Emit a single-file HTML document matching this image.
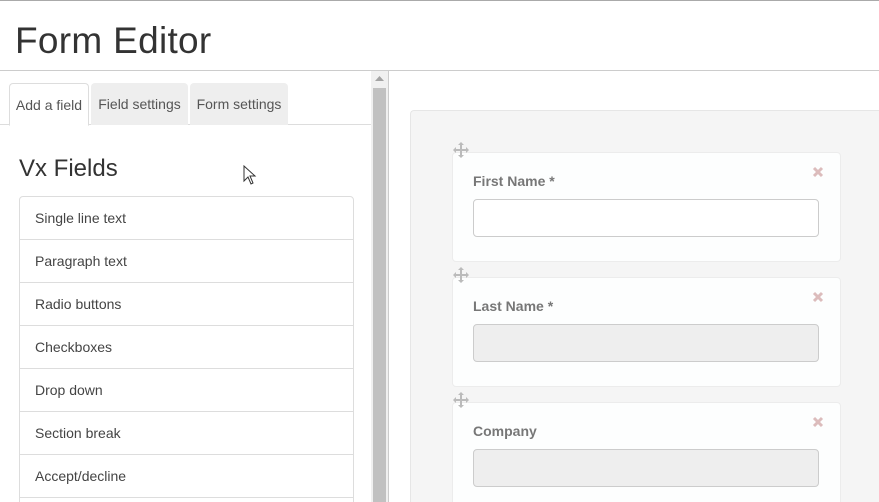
<!DOCTYPE html>
<html style="width:879px;height:502px;overflow:hidden"><head><style>
*{margin:0;padding:0;box-sizing:border-box}
body{width:879px;height:502px;overflow:hidden;background:#fff;font-family:"Liberation Sans",sans-serif;position:relative}
.a{position:absolute}
.tab{position:absolute;top:83px;height:42px;font-size:14px;color:#555;line-height:42px;text-align:center;border-radius:4px 4px 0 0}
.item{position:absolute;left:19px;width:335px;height:44px;border:1px solid #ddd;font-size:14px;color:#444;padding-left:15px;line-height:42px;background:#fff}
.card{position:absolute;left:452px;width:389px;height:110px;background:#fdfefe;border:1px solid #ececec;border-radius:4px}
.lbl{position:absolute;left:20px;top:20px;font-size:14px;font-weight:bold;color:#777}
.inp{position:absolute;left:20px;top:46px;width:346px;height:38px;border:1px solid #ccc;border-radius:4px;background:#fff}
.x{position:absolute;left:359px;top:13px}
.mv{position:absolute;z-index:5}
</style></head><body>
<div class="a" style="left:0;top:0;width:879px;height:1px;background:#aaa"></div>
<div class="a" style="left:15px;top:18px;font-size:37px;color:#333;line-height:46px;letter-spacing:0.3px">Form Editor</div>
<div class="a" style="left:0;top:70px;width:879px;height:1px;background:#ccc"></div>

<div class="a" style="left:0;top:124px;width:371px;height:1px;background:#ddd"></div>
<div class="tab" style="left:9px;width:80px;background:#fff;border:1px solid #ddd;border-bottom:1px solid #fff;height:43px">Add a field</div>
<div class="tab" style="left:91px;width:97px;background:#eee">Field settings</div>
<div class="tab" style="left:190px;width:98px;background:#eee">Form settings</div>
<div class="a" style="left:19px;top:155px;font-size:24px;color:#333;line-height:28px">Vx Fields</div>
<div class="item" style="top:196px;border-radius:4px 4px 0 0">Single line text</div>
<div class="item" style="top:239px">Paragraph text</div>
<div class="item" style="top:282px">Radio buttons</div>
<div class="item" style="top:325px">Checkboxes</div>
<div class="item" style="top:368px">Drop down</div>
<div class="item" style="top:411px">Section break</div>
<div class="item" style="top:454px">Accept/decline</div>
<div class="item" style="top:497px;height:5px;border-bottom:0"></div>
<svg class="a" style="left:243px;top:165px" width="14" height="22"><path d="M1 1 L1 16 L5 12 L8 19 L10 18 L7 11 L12 11 Z" fill="#fff" stroke="#333" stroke-width="1"/></svg>

<div class="a" style="left:371px;top:71px;width:17px;height:431px;background:#f0f0f0"></div>
<div class="a" style="left:373px;top:88px;width:13px;height:414px;background:#c1c1c1"></div>
<svg class="a" style="left:375px;top:76px" width="9" height="6"><path d="M0 5 L4.5 0 L9 5Z" fill="#a3a3a3"/></svg>
<div class="a" style="left:388px;top:71px;width:1px;height:431px;background:#ccc"></div>

<div class="a" style="left:410px;top:110px;width:469px;height:392px;background:#f5f5f5;border:1px solid #e6e6e6;border-right:0;border-bottom:0;border-radius:4px 0 0 0"></div>

<svg class="mv" style="left:453px;top:142px" width="16" height="16"><path d="M8 1V15M1 8H15" stroke="#bbb" stroke-width="2"/><path d="M8 0L5 3H11ZM8 16L5 13H11ZM0 8L3 5V11ZM16 8L13 5V11Z" fill="#bbb"/></svg>
<div class="card" style="top:152px"><div class="lbl">First Name *</div><div class="inp"></div><svg class="x" width="12" height="12"><path d="M2 2L10 10M10 2L2 10" stroke="#dcbcbc" stroke-width="3"/></svg></div>
<svg class="mv" style="left:453px;top:267px" width="16" height="16"><path d="M8 1V15M1 8H15" stroke="#bbb" stroke-width="2"/><path d="M8 0L5 3H11ZM8 16L5 13H11ZM0 8L3 5V11ZM16 8L13 5V11Z" fill="#bbb"/></svg>
<div class="card" style="top:277px"><div class="lbl">Last Name *</div><div class="inp" style="background:#eee"></div><svg class="x" width="12" height="12"><path d="M2 2L10 10M10 2L2 10" stroke="#dcbcbc" stroke-width="3"/></svg></div>
<svg class="mv" style="left:453px;top:392px" width="16" height="16"><path d="M8 1V15M1 8H15" stroke="#bbb" stroke-width="2"/><path d="M8 0L5 3H11ZM8 16L5 13H11ZM0 8L3 5V11ZM16 8L13 5V11Z" fill="#bbb"/></svg>
<div class="card" style="top:402px;height:100px;border-bottom:0;border-radius:4px 4px 0 0"><div class="lbl">Company</div><div class="inp" style="background:#eee"></div><svg class="x" width="12" height="12"><path d="M2 2L10 10M10 2L2 10" stroke="#dcbcbc" stroke-width="3"/></svg></div>
</body></html>
